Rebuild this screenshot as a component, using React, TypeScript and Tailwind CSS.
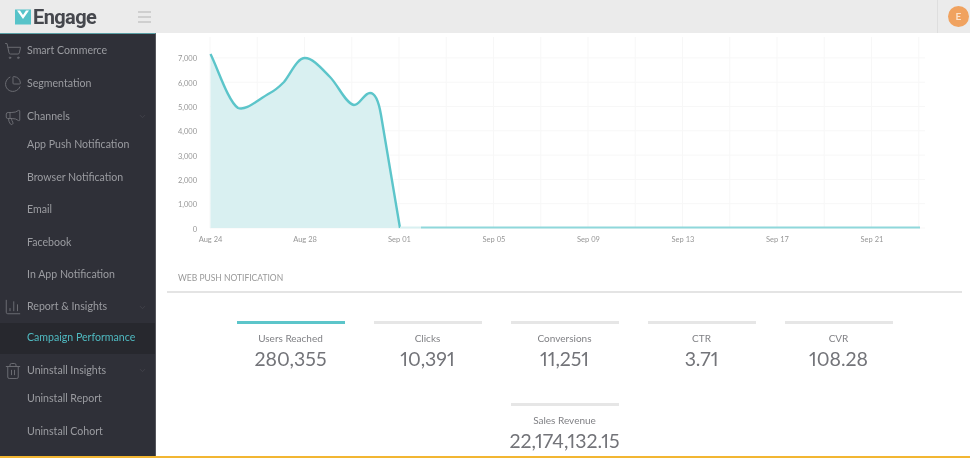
import React from "react";
import { ChartColumn, ChartPie, ChevronDown, Megaphone, ShoppingCart, Trash2 } from "lucide-react";

const menu = [
  { label: "Smart Commerce", icon: ShoppingCart, row: "h-[33px] text-[#9b9ca1]" },
  { label: "Segmentation", icon: ChartPie, row: "h-[33px] text-[#9b9ca1]" },
  { label: "Channels", icon: Megaphone, row: "h-[33px] text-[#9b9ca1]", arrow: true },
  { label: "App Push Notification", row: "h-[32px] -mt-[4px] pb-[1px] text-[#9b9ca1]" },
  { label: "Browser Notification", row: "h-[33px] text-[#9b9ca1]" },
  { label: "Email", row: "h-[32px] text-[#9b9ca1]" },
  { label: "Facebook", row: "h-[33px] text-[#9b9ca1]" },
  { label: "In App Notification", row: "h-[32px] text-[#9b9ca1]" },
  { label: "Report & Insights", icon: ChartColumn, row: "h-[32px] text-[#9b9ca1]", arrow: true },
  { label: "Campaign Performance", row: "h-[31px] pb-[2px] bg-[#27282e] text-[#4fb9c0]" },
  { label: "Uninstall Insights", icon: Trash2, row: "h-[33px] text-[#9b9ca1]", arrow: true },
  { label: "Uninstall Report", row: "h-[32px] -mt-[4px] text-[#9b9ca1]" },
  { label: "Uninstall Cohort", row: "h-[33px] text-[#9b9ca1]" },
];

const stats = [
  { label: "Users Reached", value: "280,355", active: true },
  { label: "Clicks", value: "10,391" },
  { label: "Conversions", value: "11,251" },
  { label: "CTR", value: "3.71" },
  { label: "CVR", value: "108.28" },
  { label: "Sales Revenue", value: "22,174,132.15" },
];

const yTicks = [0, 1000, 2000, 3000, 4000, 5000, 6000, 7000];
const xTicks = ["Aug 24", "Aug 28", "Sep 01", "Sep 05", "Sep 09", "Sep 13", "Sep 17", "Sep 21"];

const curve =
  "M210.5 55 C218 70 228 102 238 109 C246 112 256 102 270 94 C276 91 280 87 284 83 C291 74 297 59 305 59 C313 59 322 70 330 78 C338 86 346 105 354 106 C360 106 364 94 370 94 C376 94 379 104 381 116 L400 229";

const TrafficChart = () => (
  <svg viewBox="156 34 814 224" className="block w-[814px] h-[224px] shrink-0">
    {yTicks.map((t, i) => (
      <g key={t}>
        <line x1="210" x2="925" y1={229 - i * 24.3} y2={229 - i * 24.3} stroke="#f7f7f7" />
        <text x="197" y={232.5 - i * 24.3} textAnchor="end" fontSize="7.5" fill="#979797">
          {t.toLocaleString("en-US")}
        </text>
      </g>
    ))}
    {Array.from({ length: 16 }).map((_, i) => (
      <line key={i} x1={210 + i * 47.25} x2={210 + i * 47.25} y1="38" y2="229" stroke="#f7f7f7" />
    ))}
    <path d={`${curve} L210.5 229 Z`} fill="#d9f0f1" />
    <path d={curve} fill="none" stroke="#5cc5ca" strokeWidth="2.4" strokeLinejoin="round" />
    <line x1="400" x2="421" y1="228.5" y2="228.5" stroke="#d9f0f1" strokeWidth="2" />
    <line x1="421" x2="920" y1="228.5" y2="228.5" stroke="#8fd8db" strokeWidth="2" />
    {xTicks.map((t, i) => (
      <text key={t} x={210.5 + i * 94.5} y="243" textAnchor="middle" fontSize="7.5" fill="#979797">
        {t}
      </text>
    ))}
  </svg>
);

export default function App() {
  return (
    <div className="w-[970px] h-[458px] overflow-hidden flex flex-col bg-white blur-[0.6px] font-['Lato','Open_Sans',sans-serif]">
      <header className="h-[33px] shrink-0 flex items-center bg-[#ebebeb]">
        <div className="w-[138px] flex items-center pl-[15px]">
          <svg viewBox="0 0 16 16" className="w-[16px] h-[16px] shrink-0">
            <rect width="16" height="15" y="0.5" fill="#57c3c9" />
            <path d="M2 1.5 L8 10 L14 1.5 L11 1.5 L8 6 L5 1.5 Z" fill="#fff" />
          </svg>
          <span className="ml-[2px] text-[20px] leading-none font-bold tracking-[-0.6px] text-[#45474d] font-['Roboto',sans-serif]">
            Engage
          </span>
        </div>
        <div className="w-[13px] flex flex-col gap-[3px]">
          <span className="h-[2px] bg-[#cfcfcf]" />
          <span className="h-[2px] bg-[#cfcfcf]" />
          <span className="h-[2px] bg-[#cfcfcf]" />
        </div>
        <div className="ml-auto h-full w-[33px] border-l border-[#dedede] flex items-center justify-end pr-[1px]">
          <span className="w-[21px] h-[21px] rounded-full bg-[#f0a25f] text-[#fbe3cd] text-[10px] font-bold flex items-center justify-center">
            E
          </span>
        </div>
      </header>

      <div className="flex flex-1 min-h-0">
        <aside className="w-[156px] shrink-0 bg-[#2f3038] border-t border-[#5a9fa5] border-r border-r-[#55565c] flex flex-col overflow-hidden">
          {menu.map((item) => {
            const Icon = item.icon;
            return (
              <div
                key={item.label}
                className={`${item.row} shrink-0 relative flex items-center pl-[27px] pr-[8px] text-[10.6px]`}
              >
                {Icon && (
                  <Icon
                    size={18}
                    strokeWidth={1.3}
                    className="absolute left-[4px] top-1/2 -translate-y-1/2 text-[#6c6d73]"
                  />
                )}
                <span className="whitespace-nowrap">{item.label}</span>
                {item.arrow && <ChevronDown size={9} className="ml-auto text-[#45464d]" />}
              </div>
            );
          })}
        </aside>

        <main className="flex-1 min-w-0 flex flex-col">
          <TrafficChart />
          <div className="ml-[11px] mr-[8px] mt-[15px] pb-[7px] pl-[11px] border-b-2 border-[#e4e4e4] text-[8.5px] leading-[12px] text-[#989898] whitespace-nowrap">
            WEB PUSH NOTIFICATION
          </div>
          <div className="mt-[28px] ml-[41px] mr-[38px] flex flex-wrap justify-center gap-x-[29px] gap-y-[4px]">
            {stats.map((s) => (
              <div key={s.label} className="w-[108px] h-[78px] flex flex-col items-center">
                <div className={`w-full h-[3px] ${s.active ? "bg-[#5cc5ca]" : "bg-[#e6e6e6]"}`} />
                <div className="mt-[8px] text-[10px] leading-[12px] text-[#808185] whitespace-nowrap">
                  {s.label}
                </div>
                <div className="mt-[3px] text-[19.5px] leading-[24px] text-[#737479] whitespace-nowrap proportional-nums">
                  {s.value}
                </div>
              </div>
            ))}
          </div>
        </main>
      </div>
      <div className="h-[2px] shrink-0 -mt-[2px] relative bg-[#f2b632]" />
    </div>
  );
}
